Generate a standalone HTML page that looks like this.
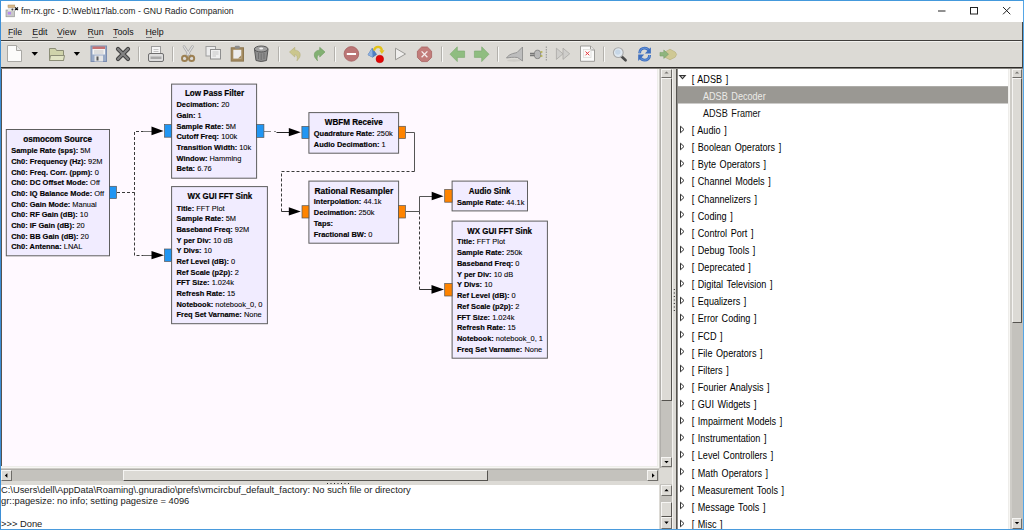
<!DOCTYPE html>
<html><head><meta charset="utf-8">
<style>
*{margin:0;padding:0;box-sizing:border-box}
html,body{width:1024px;height:530px;overflow:hidden;background:#fff;font-family:"Liberation Sans",sans-serif;position:relative}
.a{position:absolute}
.mi{position:absolute;top:26.5px;font-size:8.8px;color:#111;line-height:11px}
.mi u{text-decoration:none;border-bottom:1px solid #777}
.bt{position:absolute;text-align:center;font-weight:bold;font-size:8.2px;line-height:10.7px;white-space:nowrap;color:#000;-webkit-text-stroke:0.2px #000}
.bp{position:absolute;font-size:7.45px;line-height:10.7px;white-space:nowrap;color:#000;-webkit-text-stroke:0.08px #000}
.bp b{color:#000;-webkit-text-stroke:0.15px #000}
.port{position:absolute;width:8px;height:13px;border:1px solid #4a4a4a}
.pb{background:#3399ff}
.po{background:#ff8800}
.row{position:absolute;left:677px;width:360px;height:17px;font-size:10.1px;line-height:17px;color:#000;white-space:pre;word-spacing:1.2px;transform:scaleX(0.9);transform-origin:0 0}
.sb{position:absolute;background:#c4c2bd}
.btn{position:absolute;background:#dcdad5;border-top:1px solid #f6f5f3;border-left:1px solid #f6f5f3;border-right:1px solid #6e6c68;border-bottom:1px solid #6e6c68}
.thumb{position:absolute;background:#dcdad5;border-top:1px solid #f6f5f3;border-left:1px solid #f6f5f3;border-right:1px solid #55534f;border-bottom:1px solid #55534f}
.con{position:absolute;left:1px;font-size:9.35px;line-height:11.4px;color:#1a1a1a;white-space:pre}
</style></head><body>

<!-- ===== title bar ===== -->
<div class="a" style="left:0;top:0;width:1024px;height:23px;background:#fff"></div>
<div class="a" style="left:21.4px;top:5px;font-size:9.5px;line-height:11px;color:#1b1b1b;white-space:pre;transform:scaleX(0.905);transform-origin:0 0">fm-rx.grc - D:\Web\t17lab.com - GNU Radio Companion</div>

<svg class="a" style="left:0;top:0" width="1024" height="23">
<rect x="6" y="10" width="8.5" height="6.8" fill="#c9c9c9" stroke="#8a8a8a" stroke-width="0.6"/>
<rect x="8" y="8" width="6.5" height="3" fill="#e6e6e6"/>
<rect x="8" y="5" width="6.8" height="2.6" fill="#d9b98a" stroke="#a98a5a" stroke-width="0.5"/>
<rect x="7.8" y="12" width="3.2" height="2.5" fill="#b58cf0"/>
<circle cx="12.4" cy="9.5" r="1" fill="#444"/>
<path d="M15 7.5L18 10M18 7.5L15 10" stroke="#111" stroke-width="1.1"/>
<path d="M938 11H945.5" stroke="#222" stroke-width="1"/>
<rect x="970.5" y="7.5" width="7" height="6.5" fill="none" stroke="#222" stroke-width="1"/>
<path d="M1003 7L1010.3 14.3M1010.3 7L1003 14.3" stroke="#222" stroke-width="1"/>
</svg>
<!-- ===== menu bar ===== -->
<div class="a" style="left:0;top:22px;width:1024px;height:18px;background:#dcdad5"></div>
<div class="a" style="left:0;top:40px;width:1024px;height:1px;background:#3f3d3a"></div>
<div class="mi" style="left:7.9px"><u>F</u>ile</div>
<div class="mi" style="left:32.3px"><u>E</u>dit</div>
<div class="mi" style="left:57.1px"><u>V</u>iew</div>
<div class="mi" style="left:87.5px"><u>R</u>un</div>
<div class="mi" style="left:113px"><u>T</u>ools</div>
<div class="mi" style="left:145.5px"><u>H</u>elp</div>

<!-- ===== toolbar ===== -->
<div class="a" style="left:0;top:41px;width:1024px;height:26px;background:#dcdad5;border-top:1px solid #f2f1ee"></div>
<div class="a" style="left:0;top:67px;width:1024px;height:1px;background:#2d2b28"></div>
<div class="a" style="left:0;top:68px;width:1024px;height:1px;background:#85837e"></div>
<svg class="a" style="left:0;top:0" width="1024" height="68">
<g id="seps" fill="none" stroke-width="1">
 <path d="M138.5 46.5V61.5M172.5 46.5V61.5M278.5 46.5V61.5M334.5 46.5V61.5M441.5 46.5V61.5M497.5 46.5V61.5M603.5 46.5V61.5" stroke="#b3b1ac"/>
 <path d="M139.5 47V62M173.5 47V62M279.5 47V62M335.5 47V62M442.5 47V62M498.5 47V62M604.5 47V62" stroke="#f8f8f6"/>
</g>
<!-- new -->
<path d="M7.5 45.5H16.5L21.5 50.5V61.5H7.5Z" fill="#fcfcfb" stroke="#a9a8a4"/>
<path d="M16.5 45.5V50.5H21.5" fill="#e9e9e7" stroke="#a9a8a4"/>
<path d="M31.5 52H38L34.75 55.8Z" fill="#000"/>
<!-- open -->
<path d="M49.5 48.5H55.5L56.5 50.5H63.5V60.5H49.5Z" fill="#cfd3aa" stroke="#8c8e77"/>
<path d="M50.5 55.5H64.5L63.5 60.5H49.5Z" fill="#e1e4c4" stroke="#8c8e77"/>
<path d="M73.7 52H80L76.85 55.8Z" fill="#000"/>
<!-- save -->
<rect x="91" y="46" width="15.5" height="15.5" fill="#9aabc7" stroke="#7b8db0"/>
<rect x="92.5" y="46.5" width="12.5" height="2.5" fill="#c77272"/>
<rect x="92.5" y="49" width="12.5" height="5.5" fill="#f4f4f4"/>
<path d="M94 51H103.5M94 53H103.5" stroke="#aaa" stroke-width="0.6"/>
<rect x="94.5" y="55.5" width="8.5" height="6" fill="#e6e6e6"/>
<rect x="96.5" y="56.5" width="2" height="4" fill="#5a5a5a"/>
<!-- close X -->
<path d="M118 49L128 59M128 49L118 59" stroke="#3e3e3e" stroke-width="4.2" stroke-linecap="round"/>
<path d="M118 49L128 59M128 49L118 59" stroke="#838383" stroke-width="2.2" stroke-linecap="round"/>
<!-- print -->
<rect x="151.5" y="46.5" width="9" height="8.5" fill="#f5f5f5" stroke="#9c9c9c"/>
<path d="M153.5 49.5H158.5M153.5 51.5H158.5" stroke="#b5b5b5" stroke-width="0.8"/>
<rect x="148.5" y="53.5" width="15" height="8" rx="1.5" fill="#dedede" stroke="#6f6f6f"/>
<rect x="150.5" y="56.5" width="11" height="2.5" fill="#a9a9a9"/>
<!-- cut -->
<path d="M184 46.5L190.5 56.5M192.5 46.5L186 56.5" stroke="#a8a8a8" stroke-width="2.6" stroke-linecap="round"/>
<path d="M184 46.5L190.5 56.5M192.5 46.5L186 56.5" stroke="#e2e2e2" stroke-width="1.2" stroke-linecap="round"/>
<circle cx="184.6" cy="58.4" r="2.6" fill="none" stroke="#9c8052" stroke-width="1.9"/>
<circle cx="191.6" cy="58.4" r="2.6" fill="none" stroke="#9c8052" stroke-width="1.9"/>
<!-- copy -->
<rect x="206" y="46.5" width="9.5" height="9.5" fill="#ececec" stroke="#9d9d9d"/>
<rect x="210.5" y="49.5" width="10" height="9.5" fill="#efefef" stroke="#8e8e8e"/>
<path d="M212.5 52H218.5M212.5 54H218.5M212.5 56H216" stroke="#b8b8b8" stroke-width="0.7"/>
<!-- paste -->
<rect x="231.2" y="47.8" width="12.3" height="13.3" fill="#a38a5e" stroke="#8d7750"/>
<rect x="233.3" y="49.8" width="8" height="8.8" fill="#ececec"/>
<path d="M238 58.6L241.3 55.3V58.6Z" fill="#a38a5e"/>
<rect x="234.8" y="45.8" width="5" height="3" rx="1" fill="#8e8e8e"/>
<!-- delete -->
<path d="M254.5 49.5L256 60.5Q261 62.5 266.5 60.5L268 49.5Z" fill="#8c8c8c" stroke="#575757"/>
<ellipse cx="261.2" cy="49" rx="6.8" ry="3" fill="#a2a2a2" stroke="#575757"/>
<ellipse cx="261.2" cy="48.5" rx="2" ry="1" fill="#f0f0f0"/>
<path d="M258.5 53V59M261.2 53.5V60M264 53V59" stroke="#6a6a6a" stroke-width="0.8"/>
<!-- undo -->
<path d="M289.5 52L294.8 47.3V50.2C299.5 50.2 301.2 54 299.6 57.4L297 60.8C297.8 57.5 297.2 54.8 294.8 54.6V57Z" fill="#cbc68d" stroke="#b5b07a" stroke-width="0.6"/>
<!-- redo -->
<path d="M325 52L319.7 47.3V50.2C315 50.2 313.3 54 314.9 57.4L317.5 60.8C316.7 57.5 317.3 54.8 319.7 54.6V57Z" fill="#82b072" stroke="#6f9a61" stroke-width="0.6"/>
<!-- stop -->
<circle cx="351.4" cy="53.9" r="7.3" fill="#bb7575" stroke="#a45f5f" stroke-width="0.8"/>
<rect x="346.8" y="53" width="9.2" height="2" fill="#fff"/>
<!-- generate -->
<path d="M372.2 48.3L368 54.8L372.6 57.2L376.6 54.4Z" fill="#4f7fc2" stroke="#3b66a6" stroke-width="0.6"/>
<path d="M372.2 48.3L372.6 57.2L368 54.8Z" fill="#8fb2e0"/>
<path d="M374 50.5C375 46 381 45.5 382 50.5" fill="none" stroke="#e2c21a" stroke-width="2.2"/>
<path d="M379.3 50.2H384.5L381.9 54Z" fill="#e2c21a"/>
<circle cx="379.8" cy="59" r="3.8" fill="#e10606" stroke="#b00" stroke-width="0.5"/>
<!-- execute -->
<path d="M395.5 48.2L405.5 54L395.5 59.8Z" fill="#efeeec" stroke="#9b9a96"/>
<!-- kill -->
<path d="M421.6 47L427.4 47L431.6 51.2L431.6 57.4L427.4 61.6L421.6 61.6L417.4 57.4L417.4 51.2Z" fill="#c27c7a" stroke="#a86362" stroke-width="0.8"/>
<path d="M421.6 51.4L427.4 57.2M427.4 51.4L421.6 57.2" stroke="#f6eded" stroke-width="1.3"/>
<!-- left/right arrows -->
<path d="M450 54.2L457.3 46.8V51H464.6V57.4H457.3V61.6Z" fill="#8fbd80" stroke="#79a86b" stroke-width="0.6"/>
<path d="M489 54.2L481.7 46.8V51H474.4V57.4H481.7V61.6Z" fill="#8fbd80" stroke="#79a86b" stroke-width="0.6"/>
<!-- bypass funnel -->
<path d="M506.5 58C509 54 513 53.5 517 52.5L522.5 47V61L517.5 57.5C513 57 510 57.5 506.5 58Z" fill="#bdbdbd" stroke="#888" stroke-width="0.8"/>
<ellipse cx="514" cy="60.5" rx="7" ry="1.2" fill="#c8c6c1" opacity="0.7"/>
<!-- plug -->
<path d="M530 53.5H535M530 55.5H535" stroke="#777" stroke-width="1.4"/>
<ellipse cx="537.5" cy="54.4" rx="3.3" ry="4.2" fill="#b8b8b8" stroke="#777" stroke-width="0.8"/>
<path d="M540.5 52H542.4M540.5 56H542.4" stroke="#b3ad3c" stroke-width="1.5"/>
<path d="M546.3 46.5V61" stroke="#8b8b8b" stroke-width="0.9" stroke-dasharray="1.5 1"/>
<!-- fast forward -->
<path d="M556.4 48.2L563 53.8L556.4 59.4Z M563 48.2L569.7 53.8L563 59.4Z" fill="#cfcecb" stroke="#a9a8a5" stroke-width="0.8"/>
<!-- doc with red x -->
<path d="M580.5 46H590.5L594.5 50V61.3H580.5Z" fill="#fbfbfa" stroke="#9d9c98"/>
<path d="M590.5 46V50H594.5" fill="#e6e6e4" stroke="#9d9c98"/>
<rect x="583.5" y="49.5" width="7.5" height="8" fill="none" stroke="#dcdcda" stroke-width="0.8"/>
<path d="M585.5 51.5L589.3 55.3M589.3 51.5L585.5 55.3" stroke="#e8383d" stroke-width="1"/>
<!-- magnifier -->
<path d="M621.6 56.5L625.6 60.3" stroke="#4a4a4a" stroke-width="2.6" stroke-linecap="round"/>
<circle cx="618.3" cy="52.6" r="4.9" fill="#dfe8f0" stroke="#a9a9a9" stroke-width="1.1"/>
<circle cx="617.8" cy="52.1" r="2.7" fill="#c6d6e6"/>
<!-- refresh -->
<path d="M639.6 53.2C639.6 49.7 642 48.1 644.6 48.1C646.6 48.1 648 49 648.9 50.4" fill="none" stroke="#3e6fbf" stroke-width="2.9"/>
<path d="M639.6 53.2C639.6 49.7 642 48.1 644.6 48.1C646.6 48.1 648 49 648.9 50.4" fill="none" stroke="#6a98dc" stroke-width="1"/>
<path d="M650.9 47.2V53.6H644.9Z" fill="#3e6fbf"/>
<path d="M649.6 55C649.6 58.5 647.2 60.1 644.6 60.1C642.6 60.1 641.2 59.2 640.3 57.8" fill="none" stroke="#3e6fbf" stroke-width="2.9"/>
<path d="M649.6 55C649.6 58.5 647.2 60.1 644.6 60.1C642.6 60.1 641.2 59.2 640.3 57.8" fill="none" stroke="#6a98dc" stroke-width="1"/>
<path d="M638.2 61V54.6H644.2Z" fill="#3e6fbf"/>
<!-- last: arrow + hex -->
<path d="M670 49.2L675.2 52L676.6 54.4L675.2 57.2L670 59.8L665 57.2L663.8 54.4L665 52Z" fill="#cfc894" stroke="#b3ad78" stroke-width="0.6"/>
<path d="M660 52.4H663.8V50L668.5 54.2L663.8 58.4V56H660Z" fill="#8fb57e" stroke="#78a068" stroke-width="0.6"/>
</svg>


<!-- ===== main area background ===== -->
<div class="a" style="left:0;top:69px;width:1024px;height:461px;background:#dcdad5"></div>

<!-- canvas -->
<div class="a" style="left:1px;top:69px;width:656px;height:397px;background:#fff9ff;border-left:1px solid #55534f"></div>
<div class="a" style="left:1px;top:466px;width:659px;height:1px;background:#eeedea"></div>
<div class="a" style="left:1px;top:467px;width:659px;height:1px;background:#f7f6f3"></div>
<div class="a" style="left:1px;top:468px;width:659px;height:1px;background:#cfcdc8"></div>
<div class="a" style="left:657px;top:69px;width:1px;height:398px;background:#eeedea"></div>
<div class="a" style="left:658px;top:69px;width:1px;height:399px;background:#f7f6f3"></div>
<div class="a" style="left:659px;top:69px;width:1px;height:400px;background:#cfcdc8"></div>

<!-- canvas v scrollbar -->
<div class="sb" style="left:660px;top:69px;width:12px;height:399px;border-left:1px solid #b0aeaa"></div>
<div class="btn" style="left:661px;top:69px;width:11px;height:9px"></div>
<div class="thumb" style="left:661px;top:78px;width:11px;height:323px"></div>
<div class="btn" style="left:661px;top:457px;width:11px;height:10px"></div>

<!-- canvas h scrollbar -->
<div class="sb" style="left:1px;top:469px;width:658px;height:12px;border-top:1px solid #b0aeaa"></div>
<div class="btn" style="left:1px;top:470px;width:11px;height:11px"></div>
<div class="thumb" style="left:123px;top:470px;width:365px;height:11px"></div>
<div class="btn" style="left:647px;top:470px;width:11px;height:11px"></div>

<!-- console -->
<div class="a" style="left:1px;top:485px;width:658px;height:44px;background:#fff"></div>
<div class="con" style="top:484.6px">C:\Users\dell\AppData\Roaming\.gnuradio\prefs\vmcircbuf_default_factory: No such file or directory</div>
<div class="con" style="top:495.6px">gr::pagesize: no info; setting pagesize = 4096</div>
<div class="con" style="top:518.8px">&gt;&gt;&gt; Done</div>
<div class="sb" style="left:660px;top:484px;width:12px;height:45px"></div>
<div class="btn" style="left:661px;top:485px;width:11px;height:11px"></div>
<div class="thumb" style="left:661px;top:502px;width:11px;height:15px"></div>
<div class="btn" style="left:661px;top:517px;width:11px;height:12px"></div>

<!-- tree panel -->
<div class="a" style="left:672px;top:69px;width:1px;height:460px;background:#f4f3f0"></div>
<div class="a" style="left:676px;top:69px;width:1px;height:460px;background:#55534f"></div>
<div class="a" style="left:677px;top:69px;width:1px;height:460px;background:#8f8d89"></div>
<div class="a" style="left:678px;top:69px;width:330px;height:460px;background:#fff"></div>
<svg class="a" style="left:0;top:0" width="1024" height="110"><rect x="678" y="86.2" width="330" height="17.3" fill="#9a9893"/></svg>
<div class="row" style="top:70.60px;padding-left:16.3px">[ ADSB ]</div>
<svg class="a" style="left:678px;top:74.10px" width="9" height="6"><path d="M1.8 1.6 L7.2 1.6 L4.5 4.6 Z" fill="#fff" stroke="#333" stroke-width="1.1"/></svg>
<div class="row" style="top:87.73px;padding-left:28.9px;color:#ecebe8">ADSB Decoder</div>
<div class="row" style="top:104.86px;padding-left:28.9px;color:#111">ADSB Framer</div>
<div class="row" style="top:121.99px;padding-left:16.3px">[ Audio ]</div>
<svg class="a" style="left:679px;top:124.59px" width="7" height="9"><path d="M1.5 1.2 L5 4.5 L1.5 7.8 Z" fill="none" stroke="#333" stroke-width="1"/></svg>
<div class="row" style="top:139.12px;padding-left:16.3px">[ Boolean Operators ]</div>
<svg class="a" style="left:679px;top:141.72px" width="7" height="9"><path d="M1.5 1.2 L5 4.5 L1.5 7.8 Z" fill="none" stroke="#333" stroke-width="1"/></svg>
<div class="row" style="top:156.25px;padding-left:16.3px">[ Byte Operators ]</div>
<svg class="a" style="left:679px;top:158.85px" width="7" height="9"><path d="M1.5 1.2 L5 4.5 L1.5 7.8 Z" fill="none" stroke="#333" stroke-width="1"/></svg>
<div class="row" style="top:173.38px;padding-left:16.3px">[ Channel Models ]</div>
<svg class="a" style="left:679px;top:175.98px" width="7" height="9"><path d="M1.5 1.2 L5 4.5 L1.5 7.8 Z" fill="none" stroke="#333" stroke-width="1"/></svg>
<div class="row" style="top:190.51px;padding-left:16.3px">[ Channelizers ]</div>
<svg class="a" style="left:679px;top:193.11px" width="7" height="9"><path d="M1.5 1.2 L5 4.5 L1.5 7.8 Z" fill="none" stroke="#333" stroke-width="1"/></svg>
<div class="row" style="top:207.64px;padding-left:16.3px">[ Coding ]</div>
<svg class="a" style="left:679px;top:210.24px" width="7" height="9"><path d="M1.5 1.2 L5 4.5 L1.5 7.8 Z" fill="none" stroke="#333" stroke-width="1"/></svg>
<div class="row" style="top:224.77px;padding-left:16.3px">[ Control Port ]</div>
<svg class="a" style="left:679px;top:227.37px" width="7" height="9"><path d="M1.5 1.2 L5 4.5 L1.5 7.8 Z" fill="none" stroke="#333" stroke-width="1"/></svg>
<div class="row" style="top:241.90px;padding-left:16.3px">[ Debug Tools ]</div>
<svg class="a" style="left:679px;top:244.50px" width="7" height="9"><path d="M1.5 1.2 L5 4.5 L1.5 7.8 Z" fill="none" stroke="#333" stroke-width="1"/></svg>
<div class="row" style="top:259.03px;padding-left:16.3px">[ Deprecated ]</div>
<svg class="a" style="left:679px;top:261.63px" width="7" height="9"><path d="M1.5 1.2 L5 4.5 L1.5 7.8 Z" fill="none" stroke="#333" stroke-width="1"/></svg>
<div class="row" style="top:276.16px;padding-left:16.3px">[ Digital Television ]</div>
<svg class="a" style="left:679px;top:278.76px" width="7" height="9"><path d="M1.5 1.2 L5 4.5 L1.5 7.8 Z" fill="none" stroke="#333" stroke-width="1"/></svg>
<div class="row" style="top:293.29px;padding-left:16.3px">[ Equalizers ]</div>
<svg class="a" style="left:679px;top:295.89px" width="7" height="9"><path d="M1.5 1.2 L5 4.5 L1.5 7.8 Z" fill="none" stroke="#333" stroke-width="1"/></svg>
<div class="row" style="top:310.42px;padding-left:16.3px">[ Error Coding ]</div>
<svg class="a" style="left:679px;top:313.02px" width="7" height="9"><path d="M1.5 1.2 L5 4.5 L1.5 7.8 Z" fill="none" stroke="#333" stroke-width="1"/></svg>
<div class="row" style="top:327.55px;padding-left:16.3px">[ FCD ]</div>
<svg class="a" style="left:679px;top:330.15px" width="7" height="9"><path d="M1.5 1.2 L5 4.5 L1.5 7.8 Z" fill="none" stroke="#333" stroke-width="1"/></svg>
<div class="row" style="top:344.68px;padding-left:16.3px">[ File Operators ]</div>
<svg class="a" style="left:679px;top:347.28px" width="7" height="9"><path d="M1.5 1.2 L5 4.5 L1.5 7.8 Z" fill="none" stroke="#333" stroke-width="1"/></svg>
<div class="row" style="top:361.81px;padding-left:16.3px">[ Filters ]</div>
<svg class="a" style="left:679px;top:364.41px" width="7" height="9"><path d="M1.5 1.2 L5 4.5 L1.5 7.8 Z" fill="none" stroke="#333" stroke-width="1"/></svg>
<div class="row" style="top:378.94px;padding-left:16.3px">[ Fourier Analysis ]</div>
<svg class="a" style="left:679px;top:381.54px" width="7" height="9"><path d="M1.5 1.2 L5 4.5 L1.5 7.8 Z" fill="none" stroke="#333" stroke-width="1"/></svg>
<div class="row" style="top:396.07px;padding-left:16.3px">[ GUI Widgets ]</div>
<svg class="a" style="left:679px;top:398.67px" width="7" height="9"><path d="M1.5 1.2 L5 4.5 L1.5 7.8 Z" fill="none" stroke="#333" stroke-width="1"/></svg>
<div class="row" style="top:413.20px;padding-left:16.3px">[ Impairment Models ]</div>
<svg class="a" style="left:679px;top:415.80px" width="7" height="9"><path d="M1.5 1.2 L5 4.5 L1.5 7.8 Z" fill="none" stroke="#333" stroke-width="1"/></svg>
<div class="row" style="top:430.33px;padding-left:16.3px">[ Instrumentation ]</div>
<svg class="a" style="left:679px;top:432.93px" width="7" height="9"><path d="M1.5 1.2 L5 4.5 L1.5 7.8 Z" fill="none" stroke="#333" stroke-width="1"/></svg>
<div class="row" style="top:447.46px;padding-left:16.3px">[ Level Controllers ]</div>
<svg class="a" style="left:679px;top:450.06px" width="7" height="9"><path d="M1.5 1.2 L5 4.5 L1.5 7.8 Z" fill="none" stroke="#333" stroke-width="1"/></svg>
<div class="row" style="top:464.59px;padding-left:16.3px">[ Math Operators ]</div>
<svg class="a" style="left:679px;top:467.19px" width="7" height="9"><path d="M1.5 1.2 L5 4.5 L1.5 7.8 Z" fill="none" stroke="#333" stroke-width="1"/></svg>
<div class="row" style="top:481.72px;padding-left:16.3px">[ Measurement Tools ]</div>
<svg class="a" style="left:679px;top:484.32px" width="7" height="9"><path d="M1.5 1.2 L5 4.5 L1.5 7.8 Z" fill="none" stroke="#333" stroke-width="1"/></svg>
<div class="row" style="top:498.85px;padding-left:16.3px">[ Message Tools ]</div>
<svg class="a" style="left:679px;top:501.45px" width="7" height="9"><path d="M1.5 1.2 L5 4.5 L1.5 7.8 Z" fill="none" stroke="#333" stroke-width="1"/></svg>
<div class="row" style="top:515.98px;padding-left:16.3px">[ Misc ]</div>
<svg class="a" style="left:679px;top:518.58px" width="7" height="9"><path d="M1.5 1.2 L5 4.5 L1.5 7.8 Z" fill="none" stroke="#333" stroke-width="1"/></svg>

<!-- tree scrollbar -->
<div class="a" style="left:1008px;top:69px;width:1px;height:460px;background:#eeedea"></div><div class="a" style="left:1009px;top:69px;width:1px;height:460px;background:#f7f6f3"></div><div class="a" style="left:1010px;top:69px;width:2px;height:460px;background:#cfcdc8"></div>
<div class="sb" style="left:1012px;top:69px;width:11px;height:460px"></div>
<div class="btn" style="left:1012px;top:69px;width:10px;height:9px"></div>
<div class="thumb" style="left:1012px;top:78px;width:10px;height:245px"></div>
<div class="btn" style="left:1012px;top:518px;width:10px;height:11px"></div>

<svg class="a" style="left:0;top:0" width="1024" height="530">
<g fill="#000">
<path d="M664.3 73.6H668.7L666.5 71.4Z" fill="#7a7874"/>
<path d="M664.3 461H668.7L666.5 463.3Z"/>
<path d="M7.4 473.2V477.8L4.8 475.5Z"/>
<path d="M652 473.2V477.8L654.6 475.5Z"/>
<path d="M664.3 491.3H668.7L666.5 489Z"/>
<path d="M664.3 521.6H668.7L666.5 523.9Z"/>
<path d="M1014.8 73.6H1019.2L1017 71.4Z" fill="#7a7874"/>
<path d="M1014.8 522H1019.2L1017 524.3Z"/>
</g>
<g fill="#222">
<rect x="673.8" y="289" width="1" height="1"/><rect x="673.8" y="292.5" width="1" height="1"/><rect x="673.8" y="296" width="1" height="1"/><rect x="673.8" y="299.5" width="1" height="1"/><rect x="673.8" y="303" width="1" height="1"/><rect x="673.8" y="306.5" width="1" height="1"/><rect x="673.8" y="310" width="1" height="1"/>
<rect x="327" y="483" width="1" height="1"/><rect x="330.5" y="483" width="1" height="1"/><rect x="334" y="483" width="1" height="1"/><rect x="337.5" y="483" width="1" height="1"/><rect x="341" y="483" width="1" height="1"/><rect x="344.5" y="483" width="1" height="1"/><rect x="348" y="483" width="1" height="1"/>
</g>
</svg>
<!-- ===== canvas content ===== -->
<svg class="a" style="left:0;top:0" width="1024" height="530" id="conn">
<g fill="none" stroke="#3a3a3a" stroke-width="1">
 <path d="M117 192.5H134.5V131.5H143" stroke-dasharray="3 2"/>
 <path d="M143 131.5H152" stroke="#777"/>
 <path d="M134.5 192.5V255.5H143" stroke-dasharray="3 2"/>
 <path d="M143 255.5H152" stroke="#666"/>
 <path d="M264 131.5H271M274 131.5H276" stroke="#888"/>
 <path d="M276.5 132.5H289" stroke="#222"/>
 <path d="M406 132.5H414.5V171.5" stroke="#555"/>
 <path d="M414.5 171.5H281.5V211.5" stroke-dasharray="3 2"/>
 <path d="M281.5 211.5H289" stroke="#333"/>
 <path d="M405.5 211.5H419.5V196.5H432" stroke="#555"/>
 <path d="M419.5 211.5V289.5" stroke-dasharray="3 2"/>
 <path d="M419.5 289.5H432" stroke="#333"/>
</g>
<g fill="#000">
 <path d="M151.5 126.6L163.6 131L151.5 135.2Z"/>
 <path d="M151.5 251L164 255.3L151.5 259.3Z"/>
 <path d="M288.8 128L300.8 132.3L288.8 136.3Z"/>
 <path d="M288.8 207.3L300.8 211.5L288.8 215.6Z"/>
 <path d="M431.7 191.8L443.5 196.2L431.7 200.3Z"/>
 <path d="M431.5 285L444 289.4L431.5 293.7Z"/>
</g>
</svg>

<svg class="a" style="left:0;top:0" width="1024" height="530">
<rect x="6.3" y="129.5" width="103.20" height="126.30" fill="#f1ecff" stroke="#5e5e5e" stroke-width="1"/>
<rect x="171.6" y="84.1" width="85.00" height="94.10" fill="#f1ecff" stroke="#5e5e5e" stroke-width="1"/>
<rect x="171.6" y="186.6" width="95.80" height="137.10" fill="#f1ecff" stroke="#5e5e5e" stroke-width="1"/>
<rect x="308.9" y="112.6" width="89.70" height="40.60" fill="#f1ecff" stroke="#5e5e5e" stroke-width="1"/>
<rect x="308.9" y="181.1" width="89.70" height="62.10" fill="#f1ecff" stroke="#5e5e5e" stroke-width="1"/>
<rect x="452.1" y="181.1" width="75.40" height="29.80" fill="#f1ecff" stroke="#5e5e5e" stroke-width="1"/>
<rect x="452.1" y="221.1" width="95.30" height="137.10" fill="#f1ecff" stroke="#5e5e5e" stroke-width="1"/>
<rect x="109.5" y="186.3" width="6.90" height="12.20" fill="#2196f3" stroke="#555" stroke-width="0.7"/>
<rect x="164.6" y="124.6" width="7.00" height="12.60" fill="#2196f3" stroke="#555" stroke-width="0.7"/>
<rect x="256.6" y="124.5" width="7.30" height="12.90" fill="#2196f3" stroke="#555" stroke-width="0.7"/>
<rect x="301.9" y="126.4" width="7.00" height="12.10" fill="#2196f3" stroke="#555" stroke-width="0.7"/>
<rect x="398.6" y="126.3" width="6.80" height="12.20" fill="#ff8400" stroke="#555" stroke-width="0.7"/>
<rect x="302" y="205.7" width="6.90" height="12.30" fill="#ff8400" stroke="#555" stroke-width="0.7"/>
<rect x="398.6" y="205.6" width="6.80" height="12.40" fill="#ff8400" stroke="#555" stroke-width="0.7"/>
<rect x="444.7" y="189.5" width="7.40" height="12.70" fill="#ff8400" stroke="#555" stroke-width="0.7"/>
<rect x="164.6" y="249" width="7.00" height="12.40" fill="#2196f3" stroke="#555" stroke-width="0.7"/>
<rect x="444.7" y="283.5" width="7.40" height="12.50" fill="#ff8400" stroke="#555" stroke-width="0.7"/>
</svg>
<div class="bt" style="left:6.30px;width:103.20px;top:134.30px;font-size:9.15px;transform:scaleX(0.9)">osmocom Source</div>
<div class="bp" style="left:11.20px;top:146.10px"><b>Sample Rate (sps):</b> 5M</div>
<div class="bp" style="left:11.20px;top:156.81px"><b>Ch0: Frequency (Hz):</b> 92M</div>
<div class="bp" style="left:11.20px;top:167.52px"><b>Ch0: Freq. Corr. (ppm):</b> 0</div>
<div class="bp" style="left:11.20px;top:178.23px"><b>Ch0: DC Offset Mode:</b> Off</div>
<div class="bp" style="left:11.20px;top:188.94px"><b>Ch0: IQ Balance Mode:</b> Off</div>
<div class="bp" style="left:11.20px;top:199.65px"><b>Ch0: Gain Mode:</b> Manual</div>
<div class="bp" style="left:11.20px;top:210.36px"><b>Ch0: RF Gain (dB):</b> 10</div>
<div class="bp" style="left:11.20px;top:221.07px"><b>Ch0: IF Gain (dB):</b> 20</div>
<div class="bp" style="left:11.20px;top:231.78px"><b>Ch0: BB Gain (dB):</b> 20</div>
<div class="bp" style="left:11.20px;top:242.49px"><b>Ch0: Antenna:</b> LNAL</div>
<div class="bt" style="left:171.60px;width:85.00px;top:88.30px;font-size:8.97px;transform:scaleX(0.9)">Low Pass Filter</div>
<div class="bp" style="left:176.50px;top:100.10px"><b>Decimation:</b> 20</div>
<div class="bp" style="left:176.50px;top:110.80px"><b>Gain:</b> 1</div>
<div class="bp" style="left:176.50px;top:121.50px"><b>Sample Rate:</b> 5M</div>
<div class="bp" style="left:176.50px;top:132.20px"><b>Cutoff Freq:</b> 100k</div>
<div class="bp" style="left:176.50px;top:142.90px"><b>Transition Width:</b> 10k</div>
<div class="bp" style="left:176.50px;top:153.60px"><b>Window:</b> Hamming</div>
<div class="bp" style="left:176.50px;top:164.30px"><b>Beta:</b> 6.76</div>
<div class="bt" style="left:171.60px;width:95.80px;top:191.40px;font-size:8.82px;transform:scaleX(0.9)">WX GUI FFT Sink</div>
<div class="bp" style="left:176.50px;top:203.50px"><b>Title:</b> FFT Plot</div>
<div class="bp" style="left:176.50px;top:214.18px"><b>Sample Rate:</b> 5M</div>
<div class="bp" style="left:176.50px;top:224.86px"><b>Baseband Freq:</b> 92M</div>
<div class="bp" style="left:176.50px;top:235.54px"><b>Y per Div:</b> 10 dB</div>
<div class="bp" style="left:176.50px;top:246.22px"><b>Y Divs:</b> 10</div>
<div class="bp" style="left:176.50px;top:256.90px"><b>Ref Level (dB):</b> 0</div>
<div class="bp" style="left:176.50px;top:267.58px"><b>Ref Scale (p2p):</b> 2</div>
<div class="bp" style="left:176.50px;top:278.26px"><b>FFT Size:</b> 1.024k</div>
<div class="bp" style="left:176.50px;top:288.94px"><b>Refresh Rate:</b> 15</div>
<div class="bp" style="left:176.50px;top:299.62px"><b>Notebook:</b> notebook_0, 0</div>
<div class="bp" style="left:176.50px;top:310.30px"><b>Freq Set Varname:</b> None</div>
<div class="bt" style="left:308.90px;width:89.70px;top:117.10px;font-size:8.99px;transform:scaleX(0.9)">WBFM Receive</div>
<div class="bp" style="left:313.80px;top:128.90px"><b>Quadrature Rate:</b> 250k</div>
<div class="bp" style="left:313.80px;top:139.50px"><b>Audio Decimation:</b> 1</div>
<div class="bt" style="left:308.90px;width:89.70px;top:185.80px;font-size:9.38px;transform:scaleX(0.9)">Rational Resampler</div>
<div class="bp" style="left:313.80px;top:197.40px"><b>Interpolation:</b> 44.1k</div>
<div class="bp" style="left:313.80px;top:208.10px"><b>Decimation:</b> 250k</div>
<div class="bp" style="left:313.80px;top:218.80px"><b>Taps:</b></div>
<div class="bp" style="left:313.80px;top:229.50px"><b>Fractional BW:</b> 0</div>
<div class="bt" style="left:452.10px;width:75.40px;top:185.60px;font-size:8.88px;transform:scaleX(0.9)">Audio Sink</div>
<div class="bp" style="left:457.00px;top:197.60px"><b>Sample Rate:</b> 44.1k</div>
<div class="bt" style="left:452.10px;width:95.30px;top:225.50px;font-size:8.82px;transform:scaleX(0.9)">WX GUI FFT Sink</div>
<div class="bp" style="left:457.00px;top:237.40px"><b>Title:</b> FFT Plot</div>
<div class="bp" style="left:457.00px;top:248.16px"><b>Sample Rate:</b> 250k</div>
<div class="bp" style="left:457.00px;top:258.92px"><b>Baseband Freq:</b> 0</div>
<div class="bp" style="left:457.00px;top:269.68px"><b>Y per Div:</b> 10 dB</div>
<div class="bp" style="left:457.00px;top:280.44px"><b>Y Divs:</b> 10</div>
<div class="bp" style="left:457.00px;top:291.20px"><b>Ref Level (dB):</b> 0</div>
<div class="bp" style="left:457.00px;top:301.96px"><b>Ref Scale (p2p):</b> 2</div>
<div class="bp" style="left:457.00px;top:312.72px"><b>FFT Size:</b> 1.024k</div>
<div class="bp" style="left:457.00px;top:323.48px"><b>Refresh Rate:</b> 15</div>
<div class="bp" style="left:457.00px;top:334.24px"><b>Notebook:</b> notebook_0, 1</div>
<div class="bp" style="left:457.00px;top:345.00px"><b>Freq Set Varname:</b> None</div>

<!-- window border -->
<div class="a" style="left:1022px;top:22px;width:1px;height:46px;background:#4a4844"></div>
<div class="a" style="left:0;top:0;width:1px;height:530px;background:#3d8fd6"></div>
<div class="a" style="left:1023px;top:0;width:1px;height:530px;background:#55a6e6"></div>
<div class="a" style="left:0;top:0;width:1024px;height:1px;background:#4499dc"></div>
<div class="a" style="left:0;top:529px;width:1024px;height:1px;background:#4a9bdd"></div>
</body></html>
